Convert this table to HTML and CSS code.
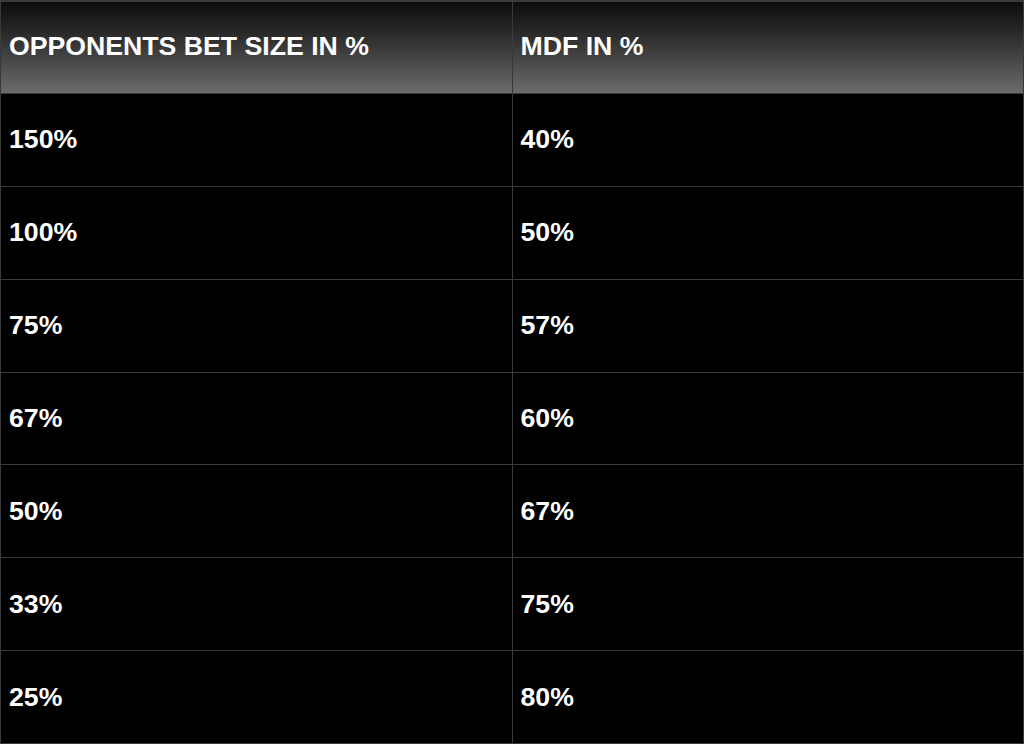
FILE: index.html
```html
<!DOCTYPE html>
<html>
<head>
<meta charset="utf-8">
<link rel="stylesheet" href="styles.css">
</head>
<body>
<table class="mdf">
  <thead>
    <tr><th>OPPONENTS BET SIZE IN %</th><th>MDF IN %</th></tr>
  </thead>
  <tbody>
    <tr><td>150%</td><td>40%</td></tr>
    <tr><td>100%</td><td>50%</td></tr>
    <tr><td>75%</td><td>57%</td></tr>
    <tr><td>67%</td><td>60%</td></tr>
    <tr><td>50%</td><td>67%</td></tr>
    <tr><td>33%</td><td>75%</td></tr>
    <tr><td>25%</td><td>80%</td></tr>
  </tbody>
</table>
</body>
</html>
```

FILE: styles.css
```css
html, body {
  margin: 0;
  padding: 0;
  background: #000;
}
.mdf {
  width: 1024px;
  height: 744px;
  border-collapse: collapse;
  table-layout: fixed;
  font-family: "Liberation Sans", Arial, sans-serif;
  font-weight: bold;
  font-size: 26.67px;
  color: #fff;
}
.mdf tr {
  height: 92.875px;
}
.mdf th, .mdf td {
  border: 1px solid #3a3a3a;
  padding: 0 8px;
  text-align: left;
  vertical-align: middle;
}
.mdf th {
  background: linear-gradient(to bottom, #0c0c0c 0%, #2a2a2a 35%, #6c6c6c 100%);
}
.mdf td {
  background: #000;
}
```
